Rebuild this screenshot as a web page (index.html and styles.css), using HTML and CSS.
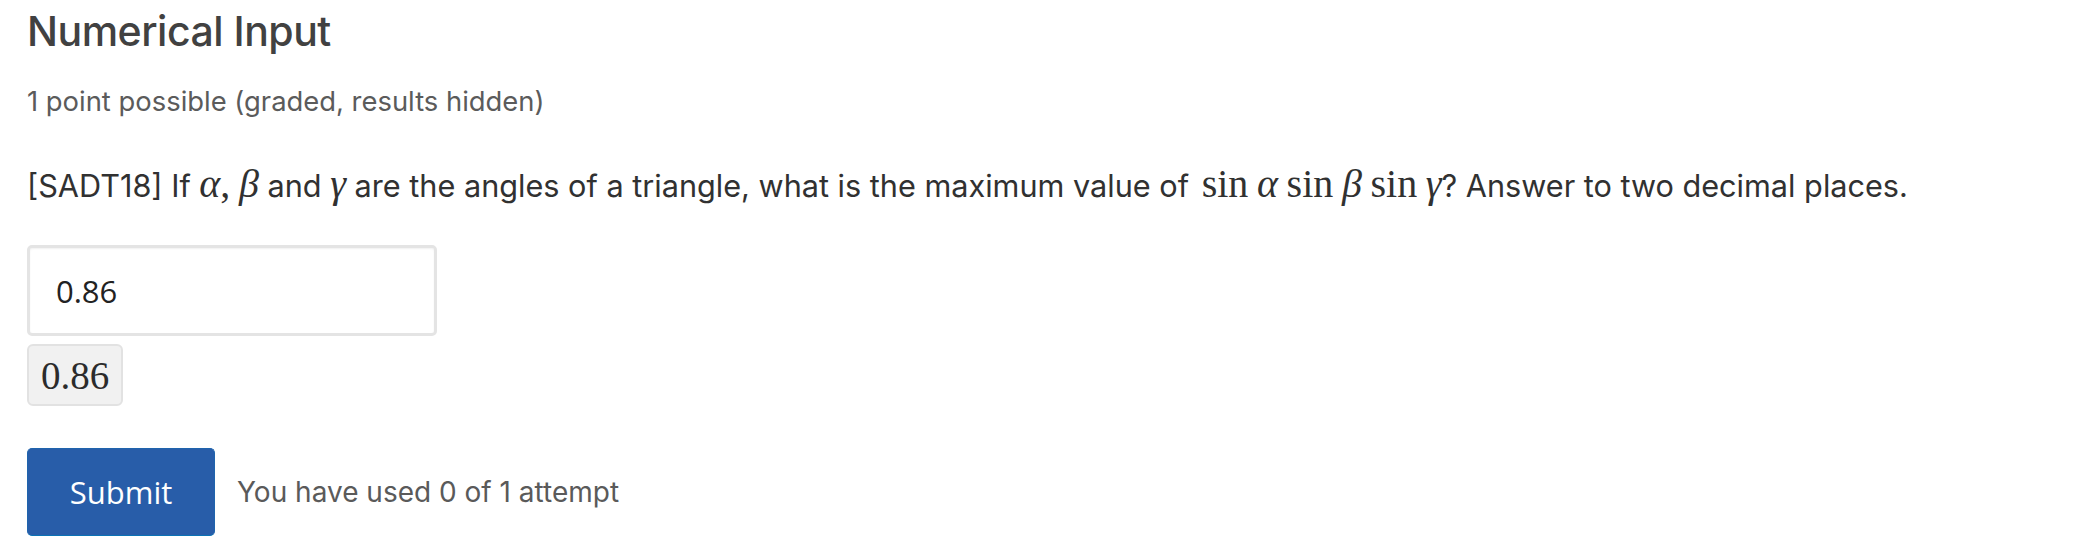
FILE: index.html
```html
<!DOCTYPE html>
<html lang="en">
<head>
<meta charset="utf-8">
<title>Numerical Input</title>
<link rel="stylesheet" href="styles.css">
</head>
<body>
<div class="problem">
  <h3 class="title">Numerical Input</h3>
  <div class="meta">1 point possible (graded, results hidden)</div>
  <p class="question">[SADT18] If <span class="mi">α</span><span class="mo">,</span> <span class="mi">β</span> and <span class="mi">γ</span> are the angles of a triangle, what is the maximum value of <span class="math"><span class="fn">sin</span> <span class="mi">α</span> <span class="fn">sin</span> <span class="mi">β</span> <span class="fn">sin</span> <span class="mi">γ</span></span>? Answer to two decimal places.</p>
  <div class="answer">
    <input class="num" type="text" value="0.86">
    <div class="preview"><span class="mn">0.86</span></div>
  </div>
  <div class="actions">
    <button class="submit" type="button">Submit</button>
    <span class="attempts">You have used 0 of 1 attempt</span>
  </div>
</div>
</body>
</html>
```
FILE: styles.css
```css
html, body {
  margin: 0;
  padding: 0;
  background: #ffffff;
}

.problem {
  padding: 5px 0 0 27px;
  font-family: Inter, "Noto Sans", sans-serif;
}

.title {
  margin: 0;
  font-size: 41px;
  line-height: 52px;
  font-weight: 500;
  color: #414141;
  letter-spacing: -0.5px;
}

.meta {
  margin-top: 27px;
  font-size: 27.4px;
  line-height: 34px;
  color: #5b5b5b;
}

.question {
  margin: 46px 0 0 0;
  font-size: 30.65px;
  line-height: 40px;
  color: #313131;
}

.math {
  margin-left: 4px;
}

.mi, .mo, .fn {
  font-family: "Liberation Serif", "DejaVu Serif", serif;
  font-size: 40px;
  line-height: 1;
}

.mi {
  font-style: italic;
}

.answer {
  margin-top: 39px;
  display: flex;
  flex-direction: column;
  align-items: flex-start;
  gap: 8px;
}

.num {
  box-sizing: border-box;
  width: 410px;
  height: 91px;
  margin: 0;
  padding: 0 0 0 26px;
  border: 3px solid #e4e4e4;
  border-radius: 5px;
  box-shadow: inset 0 1px 2px rgba(0, 0, 0, 0.06);
  font-family: "Open Sans", sans-serif;
  font-size: 31px;
  color: #222222;
  background: #ffffff;
  outline: none;
}

.preview {
  box-sizing: border-box;
  width: 96px;
  height: 62px;
  display: flex;
  align-items: center;
  justify-content: center;
  background: #f1f1f1;
  border: 2px solid #e2e2e2;
  border-radius: 6px;
}

.mn {
  font-family: "Liberation Serif", "DejaVu Serif", serif;
  font-size: 39px;
  color: #2b2b2b;
}

.actions {
  margin-top: 42px;
  display: flex;
  align-items: center;
  gap: 22px;
}

.submit {
  box-sizing: border-box;
  width: 188px;
  height: 88px;
  margin: 0;
  padding: 0;
  background: #285da9;
  border: 1px solid #1f64ad;
  border-bottom-color: #0b73b6;
  border-radius: 5px;
  color: #ffffff;
  font-family: "Open Sans", sans-serif;
  font-size: 31px;
}

.attempts {
  font-size: 28px;
  color: #5a5a5a;
}
```
